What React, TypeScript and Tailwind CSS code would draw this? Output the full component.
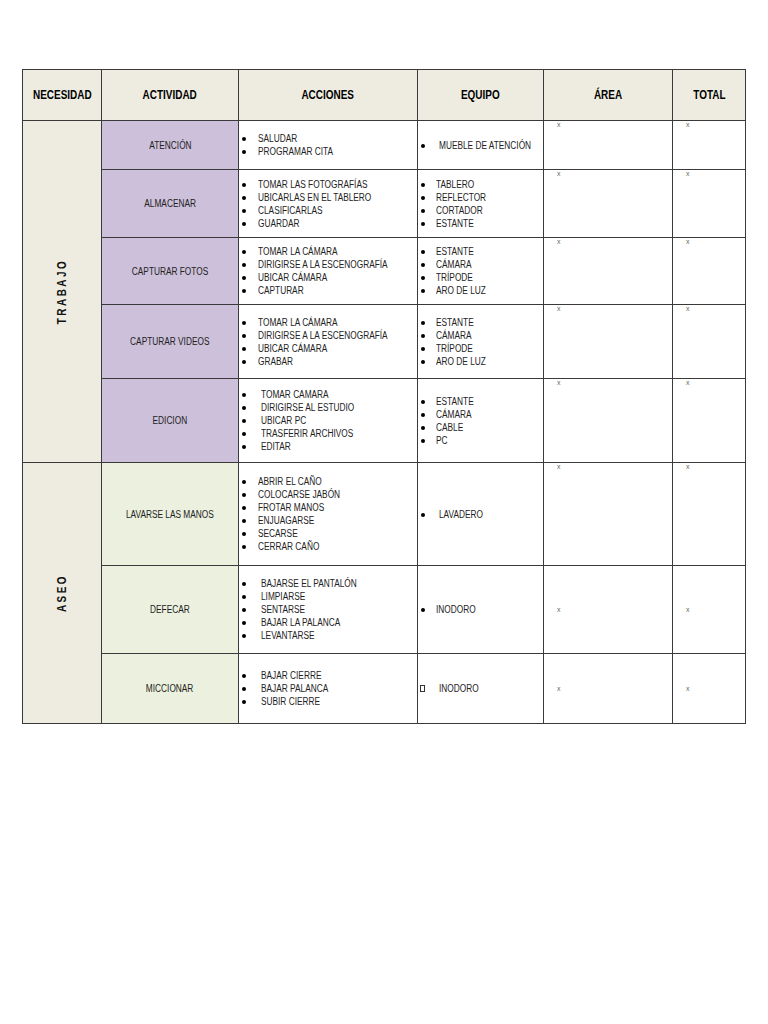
const font = { fontFamily: '"Liberation Sans Narrow", "Arial Narrow", "Liberation Sans", Arial, sans-serif' }

type Row = {
  actividad: string
  acciones: string[]
  accionesIndent: string
  equipo: string[]
  equipoIndent: string
  square?: boolean
  h: string
  xCentered?: boolean
}

const trabajo: Row[] = [
  {
    actividad: "ATENCIÓN",
    acciones: ["SALUDAR", "PROGRAMAR CITA"],
    accionesIndent: "pl-[19px]",
    equipo: ["MUEBLE DE ATENCIÓN"],
    equipoIndent: "pl-[21px]",
    h: "h-[49px]",
  },
  {
    actividad: "ALMACENAR",
    acciones: ["TOMAR LAS FOTOGRAFÍAS", "UBICARLAS EN EL TABLERO", "CLASIFICARLAS", "GUARDAR"],
    accionesIndent: "pl-[19px]",
    equipo: ["TABLERO", "REFLECTOR", "CORTADOR", "ESTANTE"],
    equipoIndent: "pl-[18px]",
    h: "h-[68px]",
  },
  {
    actividad: "CAPTURAR FOTOS",
    acciones: ["TOMAR LA CÁMARA", "DIRIGIRSE A LA ESCENOGRAFÍA", "UBICAR CÁMARA", "CAPTURAR"],
    accionesIndent: "pl-[19px]",
    equipo: ["ESTANTE", "CÁMARA", "TRÍPODE", "ARO DE LUZ"],
    equipoIndent: "pl-[18px]",
    h: "h-[67px]",
  },
  {
    actividad: "CAPTURAR VIDEOS",
    acciones: ["TOMAR LA CÁMARA", "DIRIGIRSE A LA ESCENOGRAFÍA", "UBICAR CÁMARA", "GRABAR"],
    accionesIndent: "pl-[19px]",
    equipo: ["ESTANTE", "CÁMARA", "TRÍPODE", "ARO DE LUZ"],
    equipoIndent: "pl-[18px]",
    h: "h-[74px]",
  },
  {
    actividad: "EDICION",
    acciones: ["TOMAR CAMARA", "DIRIGIRSE AL ESTUDIO", "UBICAR PC", "TRASFERIR ARCHIVOS", "EDITAR"],
    accionesIndent: "pl-[22px]",
    equipo: ["ESTANTE", "CÁMARA", "CABLE", "PC"],
    equipoIndent: "pl-[18px]",
    h: "h-[84px]",
  },
]

const aseo: Row[] = [
  {
    actividad: "LAVARSE LAS MANOS",
    acciones: ["ABRIR EL CAÑO", "COLOCARSE JABÓN", "FROTAR MANOS", "ENJUAGARSE", "SECARSE", "CERRAR CAÑO"],
    accionesIndent: "pl-[19px]",
    equipo: ["LAVADERO"],
    equipoIndent: "pl-[21px]",
    h: "h-[103px]",
  },
  {
    actividad: "DEFECAR",
    acciones: ["BAJARSE EL PANTALÓN", "LIMPIARSE", "SENTARSE", "BAJAR LA PALANCA", "LEVANTARSE"],
    accionesIndent: "pl-[22px]",
    equipo: ["INODORO"],
    equipoIndent: "pl-[18px]",
    h: "h-[88px]",
    xCentered: true,
  },
  {
    actividad: "MICCIONAR",
    acciones: ["BAJAR CIERRE", "BAJAR PALANCA", "SUBIR CIERRE"],
    accionesIndent: "pl-[22px]",
    equipo: ["INODORO"],
    equipoIndent: "pl-[21px]",
    square: true,
    h: "h-[70px]",
    xCentered: true,
  },
]

// the original uses Arial Narrow; squeeze Liberation Sans to its width
function Narrow({ children, center }: { children: React.ReactNode; center?: boolean }) {
  return (
    <span className={`inline-block whitespace-nowrap scale-x-[0.83] ${center ? "origin-center" : "origin-left"}`}>
      {children}
    </span>
  )
}

function BulletList({ items, indent, square }: { items: string[]; indent: string; square?: boolean }) {
  return (
    <ul className="flex flex-col">
      {items.map((item) => (
        <li key={item} className={`relative h-[13px] leading-[13px] ${indent}`}>
          {square ? (
            <span className="absolute left-[2px] top-[3px] h-[7px] w-[5px] border border-[#333]" />
          ) : (
            <span className="absolute left-[3px] top-[5px] h-[4px] w-[4px] rounded-full bg-black" />
          )}
          <Narrow>{item}</Narrow>
        </li>
      ))}
    </ul>
  )
}

function XCell({ centered }: { centered?: boolean }) {
  return (
    <td className={`border border-[#3a3a3a] pl-[13px] ${centered ? "align-middle" : "align-top"}`}>
      <span className="block text-[7px] leading-[8px] text-[#666]">x</span>
    </td>
  )
}

function Group({ label, rows, tint }: { label: string; rows: Row[]; tint: string }) {
  return (
    <>
      {rows.map((row, i) => (
        <tr key={row.actividad} className={row.h}>
          {i === 0 && (
            <td rowSpan={rows.length} className="border border-[#3a3a3a] bg-[#eeece1] text-center align-middle">
              <div className="flex justify-center">
                <span className="text-[12px] font-bold tracking-[3px] text-[#111] [writing-mode:vertical-rl] rotate-180 scale-y-[0.83]">
                  {label}
                </span>
              </div>
            </td>
          )}
          <td className={`border border-[#3a3a3a] ${tint} text-center align-middle`}>
            <Narrow center>{row.actividad}</Narrow>
          </td>
          <td className="border border-[#3a3a3a] bg-white align-middle">
            <BulletList items={row.acciones} indent={row.accionesIndent} />
          </td>
          <td className="border border-[#3a3a3a] bg-white align-middle">
            <BulletList items={row.equipo} indent={row.equipoIndent} square={row.square} />
          </td>
          <XCell centered={row.xCentered} />
          <XCell centered={row.xCentered} />
        </tr>
      ))}
    </>
  )
}

export default function App() {
  return (
    <div className="min-h-[1024px] w-[768px] bg-white pt-[69px] pl-[22px]" style={font}>
      <table className="w-[723px] table-fixed border-collapse border border-[#333] text-[10px] text-[#222]">
        <colgroup>
          <col className="w-[79px]" />
          <col className="w-[137px]" />
          <col className="w-[179px]" />
          <col className="w-[126px]" />
          <col className="w-[129px]" />
          <col className="w-[73px]" />
        </colgroup>
        <thead>
          <tr className="h-[51px] bg-[#eeece1] text-[12px] font-bold text-black">
            {["NECESIDAD", "ACTIVIDAD", "ACCIONES", "EQUIPO", "ÁREA", "TOTAL"].map((h) => (
              <th key={h} className="border border-[#3a3a3a]">
                <Narrow center>{h}</Narrow>
              </th>
            ))}
          </tr>
        </thead>
        <tbody>
          <Group label="TRABAJO" rows={trabajo} tint="bg-[#ccc0da]" />
          <Group label="ASEO" rows={aseo} tint="bg-[#ebf1de]" />
        </tbody>
      </table>
    </div>
  )
}
